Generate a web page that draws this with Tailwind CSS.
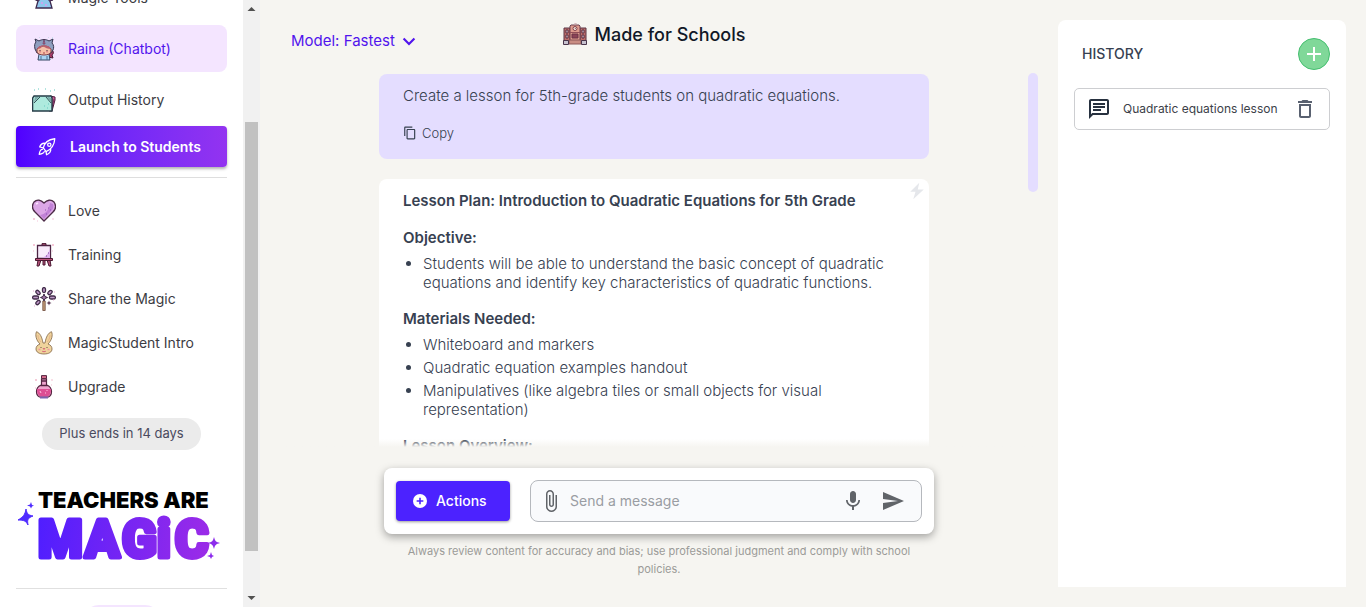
<!DOCTYPE html>
<html lang="en">

<head>
  <meta charset="UTF-8">
  <meta name="viewport" content="width=device-width, initial-scale=1.0">
  <script src="https://cdn.jsdelivr.net/npm/@tailwindcss/browser@4"></script>
  <title>Raina (Chatbot)</title>
</head>

<body class="font-[Inter,'Liberation_Sans',sans-serif]">
  <div class="flex h-screen overflow-hidden bg-[#f6f5f1]">

    <!-- Sidebar -->
    <aside class="flex w-[260px] shrink-0 bg-white">
      <div class="flex flex-1 flex-col overflow-hidden px-4">
        <nav class="-mt-[26px] flex flex-col gap-1 text-sm text-[#3c3c43]">
          <a href="#" class="flex h-[47px] shrink-0 items-center gap-3 rounded-lg px-4">
            <svg class="size-6" viewBox="0 0 24 24">
              <path d="M7 3h10l1 8 3-1 1 3-4 2 2 7H4l2-7-4-2 1-3 3 1z" fill="#8fc7ee" stroke="#3d2a4f" stroke-width="1.3" />
              <path d="M3 10l4 2v3l-3-1zM17 12h4v2l-4 1z" fill="#e0558a" stroke="#3d2a4f" />
              <path d="M9 16h2v2H9zm4 2h2v2h-2z" fill="#c9a5ee" />
            </svg>
            Magic Tools
          </a>
          <a href="#" class="flex h-[47px] shrink-0 items-center gap-3 rounded-lg bg-[#f4e5ff] px-4 text-[#5114ed]">
            <svg class="size-6" viewBox="0 0 24 24">
              <path d="M18 12c4 1 4 5 2 6l1 3-5-1z" fill="#a83a68" stroke="#4a1c38" />
              <path d="M7 17h10l1 6H6z" fill="#a9d4f4" stroke="#334663" />
              <path d="M9 19v4m6-4v4" stroke="#4c6e94" />
              <path d="M3 12C2 8 3 6 4 5L3 2l4 2c3-2 7-2 10 0l4-2-1 4c2 2 2 5 1 7l-2 3H5z" fill="#8f9fc0" stroke="#35344f" />
              <path d="M5 12c3-4 11-4 14 0v3c-1 4-13 4-14 0z" fill="#f5c0a7" stroke="#813e45" />
              <path d="M5 12c3 0 4-1 6-3 2 2 5 3 8 3-2-5-12-5-14 0z" fill="#b9606e" />
              <path d="M11 7l1-5 1 5z" fill="#d7749c" stroke="#503153" stroke-width=".6" />
              <path d="M8 13v1.500m7-1.500v1.500" stroke="#442735" />
              <path d="M7 15h2m5 0h2" stroke="#ea7d8a" />
              <path d="M11 16h2" stroke="#a7414c" />
              <path d="M7 0h1m8 0h1m3 1h1" stroke="#a9d4df" />
            </svg>
            Raina (Chatbot)
          </a>
          <a href="#" class="flex h-[47px] shrink-0 items-center gap-3 rounded-lg px-4">
            <svg class="size-6" viewBox="0 0 24 24">
              <path d="M18 8l5 1v3l-3 11h-3z" fill="#cf6298" stroke="#4f1c40" />
              <path d="M20 9l-1 13m3-11l-2 9" stroke="#60244e" stroke-width=".8" />
              <path d="M2 8h17l1 2v13H.6V10z" fill="#aeeade" stroke="#263c47" stroke-width="1.4" />
              <path d="M2 14l5-5h8l4 5v-4l-2-1H3z" fill="#79a8a7" />
              <path d="M2 15l6-6m6 0l5 6" stroke="#36545a" fill="none" />
              <path d="M12 18h1m3-2h1m-2 4h1M2 2h1m3-1h1m6 0h1m4 2h1m3-1h1" stroke="#63c9bf" />
            </svg>
            Output History
          </a>
        </nav>
        <button class="mt-[3px] flex h-[41px] shrink-0 items-center gap-3 rounded bg-linear-to-r from-[#5000ff] to-[#9333f0] px-4 text-sm font-semibold text-white shadow-[0_2px_3px_rgba(0,0,0,0.3)]">
          <svg class="ml-1 size-[22px] shrink-0" viewBox="0 0 24 24" fill="none" stroke="currentColor" stroke-width="1.400" stroke-linecap="round" stroke-linejoin="round">
            <path d="M8 13c1-5 5-9 12.500-10C20 10 16 15 11 17z" />
            <circle cx="14.500" cy="9.500" r="1.800" />
            <path d="M10 8c-3-.5-5 1.500-6 4l4 1m8 1c.5 3-1.500 5-4.500 6.500L11 17M7 14.500c-2 0-3 2-3.500 5.500 3-.5 5-1 5.500-3" />
          </svg>
          Launch to Students
        </button>
        <hr class="mt-[10px] border-[#dedede]">

        <nav class="mt-[11px] flex flex-col text-sm text-[#3c3c43]">
          <a href="#" class="flex h-11 shrink-0 items-center gap-3 px-4">
            <svg class="size-6" viewBox="0 0 24 24">
              <path d="M12 22L3 13C0 10 0 6 2 3c3-3 7-2 10 1 3-3 7-4 10-1 2 3 2 7-1 10z" fill="#dca7e6" stroke="#4c2b47" stroke-width="1.300" />
              <path d="M21 5c1 3 0 5-2 7l-7 8-4-4c6-1 9-5 10-12z" fill="#c181d6" />
              <path d="M4 5l2-1" stroke="#fbe6ff" stroke-width="1.500" />
              <path d="M13 11h1m2-2h1m-3 6h1m3-4h1" stroke="#8d54b3" />
              <path d="M2 19v2m-1-1h2m17 0h2M5 22h1" stroke="#efaac7" stroke-width=".7" />
            </svg>
            Love
          </a>
          <a href="#" class="flex h-11 shrink-0 items-center gap-3 px-4">
            <svg class="size-6" viewBox="0 0 24 24">
              <path d="M6 17l-1 6h2l2-6m2 0v5h2v-5m2 0l2 6h2l-1-6" fill="#b45378" stroke="#4b1933" />
              <path d="M10 2V.6h4V2" fill="#b45378" stroke="#4b1933" />
              <path d="M5.500 2.500h13v13h-13z" fill="#f8ebfa" stroke="#4b2342" stroke-width="1.300" />
              <path d="M18 6v9H9c5-1 7-4 9-9z" fill="#dcb1ec" />
              <path d="M14 13h1m1-3h1" stroke="#794398" />
              <path d="M3.500 15.500h17v2h-17z" fill="#bd527a" stroke="#4b1933" />
              <path d="M1 2h2M2 1v2m18-1h2m-1-1v2m-1 5h1M1 8h1" stroke="#efa2bc" stroke-width=".7" />
            </svg>
            Training
          </a>
          <a href="#" class="flex h-11 shrink-0 items-center gap-3 px-4">
            <svg class="size-6" viewBox="0 0 24 24">
              <path d="M10.800 14h2.400v9.500h-2.400z" fill="#c39d78" stroke="#6f4a3c" stroke-width=".8" />
              <g fill="#bc98c5" stroke="#412c49" stroke-width="1.300">
                <rect x="10.500" y=".6" width="3" height="5" rx="1.500" />
                <rect x=".6" y="9" width="6" height="3" rx="1.500" />
                <rect x="17.400" y="9" width="6" height="3" rx="1.500" />
                <rect x="4.500" y="3" width="3" height="5" rx="1.500" transform="rotate(-45 6 5.500)" />
                <rect x="16.500" y="3" width="3" height="5" rx="1.500" transform="rotate(45 18 5.500)" />
                <rect x="4.500" y="13" width="3" height="5" rx="1.500" transform="rotate(45 6 15.500)" />
              </g>
              <path d="M12 7l1 2.500 2.500 1-2.500 1-1 2.500-1-2.500-2.500-1 2.500-1z" fill="#a27aab" stroke="#392541" />
              <path d="M17 13.500l.7 1.800 1.800.7-1.800.7-.7 1.800-.7-1.800-1.800-.7 1.800-.7z" fill="#56334f" />
              <path d="M1 4h1m20 1h1M2 19h1m18-6h1" stroke="#e8a9d1" />
            </svg>
            Share the Magic
          </a>
          <a href="#" class="flex h-11 shrink-0 items-center gap-3 px-4">
            <svg class="size-6" viewBox="0 0 24 24" fill="#efd39c" stroke="#826344" stroke-width=".8">
              <path d="M8 13C4 9 3 4 4.500.7 8 2 10 6 11 12h2c1-6 3-10 6.500-11.300C21 4 20 9 16 13c3 1 4 3 4 5 0 3-3 5-8 5s-8-2-8-5c0-2 1-4 4-5z" />
              <path d="M6 4c0 3 1 5 3 7m9-7c0 3-1 5-3 7" stroke="#e4ac89" fill="none" />
              <path d="M9 16v1m6-1v1" stroke="#3f302b" />
              <path d="M6.500 18.500h2m7 0h2" stroke="#f196a1" stroke-width="1.400" />
              <path d="M11 17.500h2l-1 1zM10 20c1 1 3 1 4 0" fill="#de6a80" stroke="#d15e73" stroke-width=".7" />
            </svg>
            MagicStudent Intro
          </a>
          <a href="#" class="flex h-11 shrink-0 items-center gap-3 px-4">
            <svg class="size-6" viewBox="0 0 24 24">
              <path d="M9.500 4h5v6c3 1 5 3 5 6.500 0 2.500-1 4.500-3 5.500h-9c-2-1-3-3-3-5.500C4.500 13 6.500 11 9.500 10z" fill="#efa4ce" stroke="#542541" stroke-width="1.200" />
              <path d="M5 14h14c0 4-1 6-3 7.500H8C6 20 5 18 5 14z" fill="#dd4f94" />
              <path d="M9.500.6h5v3h-5z" fill="#d66b8b" stroke="#542541" />
              <path d="M9 6h6M8.500 10.500h7" stroke="#542541" stroke-width="1.600" />
              <path d="M8 16l1 2m6-3v1m-2 2h1" stroke="#ffc1e0" />
              <path d="M8 22.500h8" stroke="#7d62ae" stroke-width="2" />
              <path d="M3 5h2M4 4v2m15-1h2m-2 5h1M3 13h1" stroke="#eea5bc" stroke-width=".7" />
            </svg>
            Upgrade
          </a>
        </nav>

        <div class="mt-[9px] flex h-8 shrink-0 items-center self-center rounded-full bg-[#ebebeb] px-[17px] text-[13px] text-[#4a4a5e]">Plus ends in 14 days</div>

        <svg class="mt-8 h-[90px] w-[211px] shrink-0" viewBox="16 482 211 90">
          <defs>
            <linearGradient id="magic" gradientUnits="userSpaceOnUse" x1="37" y1="520" x2="207" y2="540">
              <stop offset="0" stop-color="#4f1eff" />
              <stop offset="1" stop-color="#9a2be8" />
            </linearGradient>
          </defs>
          <text x="38" y="508" font-family="Inter" font-size="22" font-weight="900" fill="#000">TEACHERS ARE</text>
          <text x="38 85 122 157 175" y="557" font-family="Roboto" font-size="51" font-weight="800" fill="url(#magic)" stroke="url(#magic)" stroke-width="5" stroke-linejoin="round">MAGiC</text>
          <path d="M26 509c1 5 2 6 7 7-5 2-6 3-5 9-2-4-4-5-10-5 5-3 7-5 8-11z" fill="#4f2cff" stroke="#4f2cff" stroke-linejoin="round" />
          <path d="M31 502l1 3 2 .5-2 1-1 2-1-2-3-1 3-1z" fill="#4f2cff" />
          <path d="M214 537c1 4 2 5 6 6-4 1-5 2-6 6-1-4-2-5-6-6 4-1 5-2 6-6z" fill="#8c2cec" />
          <path d="M211 552l1 3 2 1-2 1-1 2-1-2-3-1 3-1z" fill="#8c2cec" />
        </svg>

        <hr class="mt-4 shrink-0 border-[#e0e0e0]">
        <div class="mt-4 h-8 w-[78px] shrink-0 self-center rounded-full bg-[#f4e5ff]"></div>
      </div>

      <!-- Scroll track -->
      <div class="flex w-[17px] shrink-0 flex-col items-center justify-between bg-[#f1f1f1] py-[6px]">
        <svg class="h-[6px] w-[9px]" viewBox="0 0 9 6"><path d="M.5 5l4-4 4 4z" fill="#505050" /></svg>
        <div class="mt-[110px] mb-[44px] w-[13px] flex-1 bg-[#c1c1c1]"></div>
        <svg class="h-[6px] w-[9px]" viewBox="0 0 9 6"><path d="M.5 1l4 4 4-4z" fill="#505050" /></svg>
      </div>
    </aside>

    <!-- Chat -->
    <main class="flex min-w-0 flex-1 flex-col px-5">
      <header class="mr-[10px] grid h-[73px] shrink-0 grid-cols-[1fr_auto_1fr] items-start px-[11px] pt-5">
        <button class="mt-[11px] flex items-center gap-1 text-[15px] leading-5 text-[#5114ed]">
          Model: Fastest
          <svg class="size-5" viewBox="0 0 24 24" fill="none" stroke="currentColor" stroke-width="2.600"><path d="M5.500 9l6.500 6.500L18.500 9" /></svg>
        </button>
        <h1 class="flex items-center gap-2 text-lg leading-[30px] font-medium text-[#111827]">
          <svg class="size-6" viewBox="0 0 24 24">
            <path d="M1 5h6v15H1zM17 5h6v15h-6z" fill="#bc6d6b" stroke="#5b3445" />
            <path d="M7 3l1-1h8l1 1v17H7z" fill="#df9b8d" stroke="#6c4051" />
            <path d="M12 2V0h2" stroke="#c9a6ac" fill="none" />
            <circle cx="12" cy="5.500" r="2" fill="#fff1e5" stroke="#81414c" />
            <path d="M12 4.500v1h1" stroke="#5c3445" stroke-width=".6" fill="none" />
            <path d="M3 7h2v3H3zM3 12h2v3H3zM19 7h2v3h-2zM19 12h2v3h-2z" fill="#f1ddea" stroke="#502b3c" />
            <path d="M9 11h6v4H9z" fill="#8b4256" stroke="#6b3447" />
            <path d="M7 9.500h10" stroke="#934f58" />
            <path d="M6 17h12v4H6z" fill="#c98d83" stroke="#8c5958" />
            <path d="M.5 17.500h5v4h-5zM18.500 17.500h5v4h-5z" fill="#c6c1ce" stroke="#48354b" />
          </svg>
          Made for Schools
        </h1>
      </header>

      <div class="relative flex min-h-0 flex-1 overflow-hidden">
        <div class="flex min-w-0 flex-1 flex-col items-center gap-5 pt-px text-[15px] leading-[19px] text-[#374151]">
          <section class="flex w-full max-w-[550px] shrink-0 flex-col items-start rounded-lg bg-[#e4ddff] px-6 pt-3 pb-4 font-light">
            <p class="leading-5">Create a lesson for 5th-grade students on quadratic equations.</p>
            <button class="mt-[17px] flex items-center gap-[5px] text-[13px] leading-5">
              <svg class="size-[14px]" viewBox="1 0 22 24" fill="currentColor"><path d="M16 1H4c-1.100 0-2 .9-2 2v14h2V3h12V1zm3 4H8c-1.100 0-2 .9-2 2v14c0 1.100.9 2 2 2h11c1.100 0 2-.9 2-2V7c0-1.100-.9-2-2-2zm0 16H8V7h11v14z" /></svg>
              Copy
            </button>
          </section>

          <section class="relative w-full max-w-[550px] shrink-0 rounded-lg bg-white px-6 pt-3 pb-6">
            <svg class="absolute top-[3px] right-[3px] size-[18px]" viewBox="0 0 24 24" fill="#e5e7eb"><path d="M15 1L3 13h7l-3 10 14-13h-8z" /></svg>
            <h2 class="font-semibold">Lesson Plan: Introduction to Quadratic Equations for 5th Grade</h2>
            <h3 class="mt-[18px] font-semibold">Objective:</h3>
            <ul class="mt-[7px] flex list-disc flex-col gap-1 pl-5 font-light">
              <li>Students will be able to understand the basic concept of quadratic equations and identify key characteristics of quadratic functions.</li>
            </ul>
            <h3 class="mt-[17px] font-semibold">Materials Needed:</h3>
            <ul class="mt-[7px] flex list-disc flex-col gap-1 pl-5 font-light">
              <li>Whiteboard and markers</li>
              <li>Quadratic equation examples handout</li>
              <li>Manipulatives (like algebra tiles or small objects for visual representation)</li>
            </ul>
            <h3 class="mt-[17px] font-semibold">Lesson Overview:</h3>
          </section>
        </div>
        <div class="h-[119px] w-[10px] shrink-0 rounded-full bg-[#e4ddff]"></div>
        <div class="absolute inset-x-0 bottom-0 h-2 bg-linear-to-b from-transparent to-[#f6f5f1]"></div>
      </div>

      <footer class="mt-[21px] flex shrink-0 flex-col items-center pb-[29px]">
        <form onsubmit="return false" class="flex h-[66px] w-full max-w-[550px] items-center gap-5 rounded-lg bg-white px-3 shadow-[0_3px_8px_rgba(0,0,0,0.35)]">
          <button type="button" class="flex h-10 w-[114px] shrink-0 items-center gap-2 rounded bg-[#4c22ff] px-4 text-sm font-medium text-white shadow-[0_1px_3px_rgba(0,0,0,0.4)]">
            <svg class="size-4" viewBox="0 0 24 24"><circle cx="12" cy="12" r="10.500" fill="#fff" /><path d="M12 7v10M7 12h10" stroke="#4c22ff" stroke-width="2.400" /></svg>
            Actions
          </button>
          <div class="flex h-[42px] min-w-0 flex-1 items-center rounded-lg border border-[#b5b8bd] bg-[#f9fafc] pr-4 pl-2 text-[#616469]">
            <button type="button" aria-label="Attach file" class="shrink-0">
              <svg class="size-6" viewBox="0 0 24 24" fill="currentColor"><path d="M16.500 6v11.500c0 2.210-1.790 4-4 4s-4-1.790-4-4V5c0-1.380 1.120-2.500 2.500-2.500s2.500 1.120 2.500 2.500v10.500c0 .55-.45 1-1 1s-1-.45-1-1V6H10v9.500c0 1.380 1.120 2.500 2.500 2.500s2.500-1.120 2.500-2.500V5c0-2.210-1.790-4-4-4S7 2.790 7 5v12.500c0 3.040 2.460 5.500 5.500 5.500s5.500-2.460 5.500-5.500V6h-1.500z" /></svg>
            </button>
            <input type="text" aria-label="Message" placeholder="Send a message" class="ml-[7px] min-w-0 flex-1 bg-transparent text-sm outline-none placeholder:text-[#9a9da3]">
            <button type="button" aria-label="Dictate" class="shrink-0">
              <svg class="size-6" viewBox="0 0 24 24" fill="currentColor"><path d="M12 14c1.660 0 2.990-1.340 2.990-3L15 5c0-1.660-1.340-3-3-3S9 3.340 9 5v6c0 1.660 1.340 3 3 3zm5.300-3c0 3-2.540 5.100-5.300 5.100S6.700 14 6.700 11H5c0 3.410 2.720 6.230 6 6.720V21h2v-3.280c3.280-.48 6-3.300 6-6.720h-1.700z" /></svg>
            </button>
            <button type="button" aria-label="Send" class="ml-4 shrink-0">
              <svg class="size-6" viewBox="0 0 24 24" fill="currentColor"><path d="M2.010 21L23 12 2.010 3 2 10l15 2-15 2z" /></svg>
            </button>
          </div>
        </form>
        <p class="mt-2 max-w-[550px] px-4 text-center text-[11px] leading-[18px] text-[#9b9b98]">Always review content for accuracy and bias; use professional judgment and comply with school policies.</p>
      </footer>
    </main>

    <!-- History -->
    <aside class="my-5 mr-5 flex w-[288px] shrink-0 flex-col rounded-t-lg bg-white px-4 pt-[18px]">
      <div class="flex items-center justify-between pl-2">
        <h2 class="text-sm font-medium text-[#374151]">HISTORY</h2>
        <button aria-label="New chat" class="flex size-8 items-center justify-center rounded-full border border-[#45bf70] bg-[#80d899] text-white">
          <svg class="size-6" viewBox="0 0 24 24" fill="currentColor"><path d="M19 13h-6v6h-2v-6H5v-2h6V5h2v6h6v2z" /></svg>
        </button>
      </div>
      <a href="#" class="mt-[18px] flex h-[42px] items-center rounded-[5px] border border-[#cdced1] px-3 text-xs text-[#3c4149]">
        <svg class="size-6 text-[#27313f]" viewBox="0 0 24 24" fill="currentColor"><path d="M4 4h16v12H5.170L4 17.170V4m0-2c-1.100 0-1.990.9-1.990 2L2 22l4-4h14c1.100 0 2-.9 2-2V4c0-1.100-.9-2-2-2H4zm2 10h8v2H6v-2zm0-3h12v2H6V9zm0-3h12v2H6V6z" /></svg>
        <span class="ml-3 flex-1 whitespace-nowrap">Quadratic equations lesson</span>
        <svg class="size-6 text-[#596170]" viewBox="0 0 24 24" fill="currentColor"><path d="M6 19c0 1.100.9 2 2 2h8c1.100 0 2-.9 2-2V7H6v12zM8 9h8v10H8V9zm7.500-5l-1-1h-5l-1 1H5v2h14V4z" /></svg>
      </a>
    </aside>

  </div>
</body>

</html>
